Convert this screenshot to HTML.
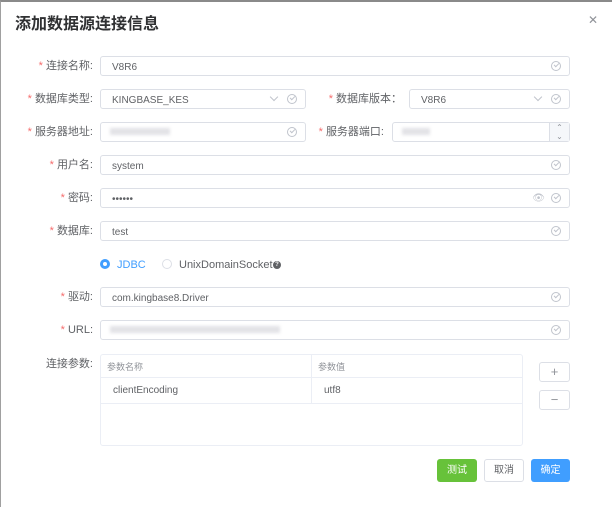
<!DOCTYPE html>
<html><head><meta charset="utf-8"><style>
*{box-sizing:border-box;margin:0;padding:0}
body{width:612px;height:507px;background:#fff;font-family:"Liberation Sans","Noto Sans CJK SC",sans-serif;position:relative;overflow:hidden;color:#606266}
.frame{position:absolute;left:0;top:0;width:612px;height:507px;border-top:2px solid #8a8a8a;border-left:1px solid #a0a0a0}
.title{position:absolute;left:15px;top:14px;font-size:16px;font-weight:bold;color:#303133;line-height:22px}
.close{position:absolute;left:588px;top:13px;font-size:12px;color:#909399}
.lbl{position:absolute;font-size:11px;color:#606266;text-align:right;height:20px;line-height:20px}
.lbl b{color:#f56c6c;font-weight:normal;margin-right:3px}
.in{position:absolute;height:20px;border:1px solid #dcdfe6;border-radius:3px;font-size:10px;line-height:18px;padding-left:11px;padding-top:2px;color:#606266;overflow:visible}
.ok{position:absolute;top:4px;width:10px;height:10px;border:1px solid #c0c4cc;border-radius:50%}
.ok:after{content:"";position:absolute;left:2px;top:1px;width:4px;height:2px;border-left:1px solid #c0c4cc;border-bottom:1px solid #c0c4cc;transform:rotate(-45deg)}
.chev{position:absolute;top:4px;width:6px;height:6px;border-right:1px solid #c0c4cc;border-bottom:1px solid #c0c4cc;transform:rotate(45deg)}
.blur{position:absolute;height:7px;background:#e2e2e6;filter:blur(1.5px)}
.btn{position:absolute;height:23px;border-radius:3px;font-size:10px;line-height:23px;text-align:center}
</style></head><body>
<div class="frame"></div>
<div class="title">添加数据源连接信息</div>
<div class="close">✕</div>

<div class="lbl" style="right:519px;top:56px"><b>*</b>连接名称:</div>
<div class="in" style="left:100px;top:56px;width:470px">V8R6<span class="ok" style="right:8px"></span></div>

<div class="lbl" style="right:519px;top:89px"><b>*</b>数据库类型:</div>
<div class="in" style="left:100px;top:89px;width:206px">KINGBASE_KES<span class="chev" style="right:28px"></span><span class="ok" style="right:8px"></span></div>
<div class="lbl" style="right:210px;top:89px"><b>*</b>数据库版本：</div>
<div class="in" style="left:409px;top:89px;width:161px">V8R6<span class="chev" style="right:28px"></span><span class="ok" style="right:8px"></span></div>

<div class="lbl" style="right:519px;top:122px"><b>*</b>服务器地址:</div>
<div class="in" style="left:100px;top:122px;width:206px"><span class="ok" style="right:8px"></span></div>
<div class="blur" style="left:110px;top:128px;width:60px"></div>
<div class="lbl" style="right:228px;top:122px"><b>*</b>服务器端口:</div>
<div class="in" style="left:392px;top:122px;width:178px"></div>
<div class="blur" style="left:402px;top:128px;width:28px"></div>
<div style="position:absolute;left:549px;top:123px;width:20px;height:18px;background:#f5f7fa;border-left:1px solid #dcdfe6;font-size:8px;color:#909399;text-align:center;line-height:9px">⌃<br>⌄</div>

<div class="lbl" style="right:519px;top:155px"><b>*</b>用户名:</div>
<div class="in" style="left:100px;top:155px;width:470px">system<span class="ok" style="right:8px"></span></div>

<div class="lbl" style="right:519px;top:188px"><b>*</b>密码:</div>
<div class="in" style="left:100px;top:188px;width:470px">••••••<span style="position:absolute;right:24px;top:1px;color:#c0c4cc;font-size:10px;line-height:18px">👁</span><span class="ok" style="right:8px"></span></div>

<div class="lbl" style="right:519px;top:221px"><b>*</b>数据库:</div>
<div class="in" style="left:100px;top:221px;width:470px">test<span class="ok" style="right:8px"></span></div>

<div style="position:absolute;left:100px;top:259px;width:10px;height:10px;border-radius:50%;background:#409eff"><div style="position:absolute;left:3px;top:3px;width:4px;height:4px;border-radius:50%;background:#fff"></div></div>
<div style="position:absolute;left:117px;top:258px;font-size:11px;line-height:14px;color:#409eff">JDBC</div>
<div style="position:absolute;left:162px;top:259px;width:10px;height:10px;border-radius:50%;border:1px solid #dcdfe6"></div>
<div style="position:absolute;left:179px;top:258px;font-size:11px;line-height:14px;color:#606266">UnixDomainSocket</div>
<div style="position:absolute;left:273px;top:261px;width:8px;height:8px;border-radius:50%;background:#606266;color:#fff;font-size:6px;line-height:8px;text-align:center;font-weight:bold">?</div>

<div class="lbl" style="right:519px;top:287px"><b>*</b>驱动:</div>
<div class="in" style="left:100px;top:287px;width:470px">com.kingbase8.Driver<span class="ok" style="right:8px"></span></div>

<div class="lbl" style="right:519px;top:320px"><b>*</b>URL:</div>
<div class="in" style="left:100px;top:320px;width:470px"><span class="ok" style="right:8px"></span></div>
<div class="blur" style="left:110px;top:326px;width:170px"></div>

<div class="lbl" style="right:519px;top:354px">连接参数:</div>
<div style="position:absolute;left:100px;top:354px;width:423px;height:92px;border:1px solid #ebeef5;border-radius:3px"></div>
<div style="position:absolute;left:101px;top:377px;width:421px;height:1px;background:#ebeef5"></div>
<div style="position:absolute;left:101px;top:403px;width:421px;height:1px;background:#ebeef5"></div>
<div style="position:absolute;left:311px;top:355px;width:1px;height:48px;background:#ebeef5"></div>
<div style="position:absolute;left:107px;top:361px;font-size:9px;line-height:12px;color:#909399">参数名称</div>
<div style="position:absolute;left:318px;top:361px;font-size:9px;line-height:12px;color:#909399">参数值</div>
<div style="position:absolute;left:113px;top:384px;font-size:10px;line-height:13px;color:#606266">clientEncoding</div>
<div style="position:absolute;left:324px;top:384px;font-size:10px;line-height:13px;color:#606266">utf8</div>

<div class="btn" style="left:539px;top:362px;width:31px;height:20px;line-height:18px;border:1px solid #dcdfe6;color:#909399;font-size:13px">+</div>
<div class="btn" style="left:539px;top:390px;width:31px;height:20px;line-height:18px;border:1px solid #dcdfe6;color:#909399;font-size:13px">−</div>

<div class="btn" style="left:437px;top:459px;width:40px;background:#67c23a;color:#fff">测试</div>
<div class="btn" style="left:484px;top:459px;width:40px;border:1px solid #dcdfe6;color:#606266;line-height:21px">取消</div>
<div class="btn" style="left:531px;top:459px;width:39px;background:#409eff;color:#fff">确定</div>
</body></html>
